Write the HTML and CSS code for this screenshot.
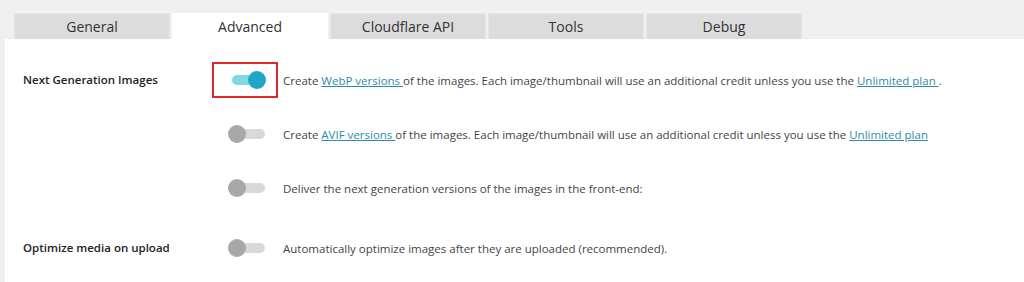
FILE: index.html
```html
<!DOCTYPE html>
<html lang="en">
<head>
    <meta charset="UTF-8">
    <title>Settings - Advanced</title>
    <link rel="stylesheet" href="styles.css">
</head>
<body>
<div class="tabs">
    <div class="tab">General</div>
    <div class="tab active">Advanced</div>
    <div class="tab">Cloudflare API</div>
    <div class="tab">Tools</div>
    <div class="tab">Debug</div>
</div>
<div class="panel">
    <div class="setting">
        <div class="label">Next Generation Images</div>
        <div class="options">
            <div class="option">
                <div class="switch-cell highlight"><span class="switch on"></span></div>
                <div class="text">Create <a href="#">WebP versions </a>of the images. Each image/thumbnail will use an additional credit unless you use the <a href="#">Unlimited plan </a>.</div>
            </div>
            <div class="option">
                <div class="switch-cell"><span class="switch"></span></div>
                <div class="text">Create <a href="#">AVIF versions </a>of the images. Each image/thumbnail will use an additional credit unless you use the <a href="#">Unlimited plan</a></div>
            </div>
            <div class="option">
                <div class="switch-cell"><span class="switch"></span></div>
                <div class="text">Deliver the next generation versions of the images in the front-end:</div>
            </div>
        </div>
    </div>
    <div class="setting">
        <div class="label">Optimize media on upload</div>
        <div class="options">
            <div class="option">
                <div class="switch-cell"><span class="switch"></span></div>
                <div class="text">Automatically optimize images after they are uploaded (recommended).</div>
            </div>
        </div>
    </div>
</div>
</body>
</html>
```

FILE: styles.css
```css
body {
    margin: 0;
    background: #f0f0f0;
    font-family: 'Open Sans', 'Noto Sans', sans-serif;
    color: #444;
    height: 282px;
    display: flex;
    flex-direction: column;
}
.tabs {
    display: flex;
    gap: 2px;
    padding: 13px 0 0 14px;
}
.tab {
    width: 156px;
    height: 26px;
    box-sizing: border-box;
    background: #dcdcdc;
    border: 1px solid #e6e6e6;
    border-bottom: none;
    color: #333;
    font-size: 14px;
    line-height: 25px;
    text-align: center;
}
.tab.active { background: #fff; border-color: #fff; }
.panel {
    flex: 1;
    margin-left: 5px;
    background: #fff;
    padding: 23px 0 0 18px;
    display: flex;
    flex-direction: column;
    gap: 24px;
}
.setting { display: flex; }
.label {
    width: 189px;
    font-size: 11.5px;
    font-weight: 600;
    color: #222;
    line-height: 36px;
}
.options {
    display: flex;
    flex-direction: column;
    gap: 18px;
}
.option {
    display: flex;
    align-items: center;
    height: 36px;
}
.switch-cell {
    width: 66px;
    height: 36px;
    box-sizing: border-box;
    display: flex;
    align-items: center;
    padding-left: 17px;
}
.highlight { border: 2px solid #e0262b; padding-left: 18px; }
.switch {
    position: relative;
    width: 36px;
    height: 10px;
    border-radius: 5px;
    background: #d9d9d9;
}
.switch::after {
    content: '';
    position: absolute;
    left: -1px;
    top: -4px;
    width: 18px;
    height: 18px;
    border-radius: 50%;
    background: #a8a8a8;
}
.switch.on { background: #80d8e2; width: 33px; }
.switch.on::after { left: auto; right: -1px; background: #1fa6c8; }
.text {
    margin-left: 5px;
    font-size: 11.5px;
    white-space: nowrap;
}
.text a { color: #2e8ba6; }
```
